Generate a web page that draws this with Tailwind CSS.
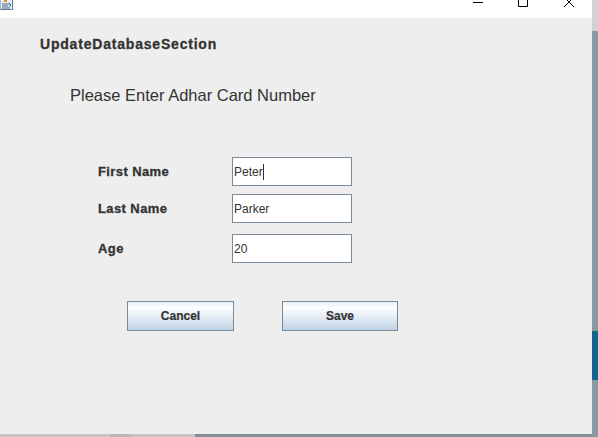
<!DOCTYPE html>
<html lang="en">
  <head>
    <meta charset="UTF-8" />
    <title>UpdateDatabaseSection</title>
    <script src="https://cdn.jsdelivr.net/npm/@tailwindcss/browser@4"></script>
  </head>
  <body class="w-[598px] h-[437px] overflow-hidden bg-[#8a9aa1] font-['Liberation_Sans',Arial,sans-serif]">
    <div class="flex h-[437px]">
      <!-- Window -->
      <div class="w-[592px] flex flex-col">
        <!-- Title bar, cut off at the top -->
        <div class="h-[18px] bg-white flex justify-between overflow-hidden shrink-0">
          <svg width="14" height="10" viewBox="0 0 14 10" class="block">
            <rect x="0" y="-4" width="12.5" height="13.5" fill="#e8eef4" stroke="#5f7f9f" />
            <path d="M4 0h3v2H4z" fill="#e08a20" />
            <path d="M2 4h8M2 6h6M2 8h8" stroke="#4a6a8a" />
            <path d="M9 3l2 2-2 2" stroke="#4a6a8a" fill="none" />
          </svg>
          <svg width="101" height="10" viewBox="0 0 101 10" class="block mr-[18px]">
            <path d="M0 2.5h10" stroke="#000" />
            <path d="M45.5 -4v10.5h9v-10.5" stroke="#000" fill="none" />
            <path d="M91 7l10-10M91 -3l10 10" stroke="#000" fill="none" />
          </svg>
        </div>

        <!-- Form -->
        <div class="flex-1 bg-[#eeeeee] text-[#333333] pt-[18px]">
          <h1 class="ml-[40px] text-[14px] leading-[16px] font-bold tracking-[0.8px] [-webkit-text-stroke:0.3px_#333333]">UpdateDatabaseSection</h1>
          <p class="ml-[70px] mt-[34px] text-[16.5px] leading-[18px]">Please Enter Adhar Card Number</p>

          <div class="ml-[98px] mt-[53px] flex flex-col">
            <div class="flex items-center h-[29px]">
              <label class="w-[134px] text-[13px] font-bold tracking-[0.4px] [-webkit-text-stroke:0.3px_#333333]">First Name</label>
              <div class="w-[120px] h-[29px] flex items-center bg-white border border-[#7a8a99] px-[1px] pt-[1px] text-[12px]">
                <span>Peter</span><span class="w-px h-[16px] bg-[#333333]"></span>
              </div>
            </div>
            <div class="flex items-center h-[29px] mt-[8px]">
              <label class="w-[134px] text-[13px] font-bold tracking-[0.4px] [-webkit-text-stroke:0.3px_#333333]">Last Name</label>
              <div class="w-[120px] h-[29px] flex items-center bg-white border border-[#7a8a99] px-[1px] pt-[1px] text-[12px]">Parker</div>
            </div>
            <div class="flex items-center h-[29px] mt-[11px]">
              <label class="w-[134px] text-[13px] font-bold tracking-[0.4px] [-webkit-text-stroke:0.3px_#333333]">Age</label>
              <div class="w-[120px] h-[29px] flex items-center bg-white border border-[#7a8a99] px-[1px] pt-[1px] text-[12px]">20</div>
            </div>
          </div>

          <div class="ml-[127px] mt-[38px] flex gap-[48px]">
            <button class="w-[107px] h-[30px] border border-[#7a8a99] bg-gradient-to-b from-[#e6eef6] via-white via-[20%] to-[#c0d3e6] text-[12px] font-bold [-webkit-text-stroke:0.2px_#333333]">Cancel</button>
            <button class="w-[116px] h-[30px] border border-[#7a8a99] bg-gradient-to-b from-[#e6eef6] via-white via-[20%] to-[#c0d3e6] text-[12px] font-bold [-webkit-text-stroke:0.2px_#333333]">Save</button>
          </div>
        </div>

        <!-- Bottom edge -->
        <div class="h-[3px] flex shrink-0">
          <div class="w-[110px] bg-[#c6c6c6]"></div>
          <div class="w-[22px] bg-[#b8b8b8]"></div>
          <div class="w-[63px] bg-[#c6c6c6]"></div>
          <div class="flex-1 bg-[#7f9098]"></div>
        </div>
      </div>

      <!-- What shows beside the window -->
      <div class="flex-1 flex flex-col">
        <div class="h-[31px] bg-[#d2d2d2]"></div>
        <div class="h-[300px] bg-[#8a9aa1]"></div>
        <div class="h-[49px] bg-[#15658c]"></div>
        <div class="flex-1 bg-[#8a9aa1]"></div>
      </div>
    </div>
  </body>
</html>
